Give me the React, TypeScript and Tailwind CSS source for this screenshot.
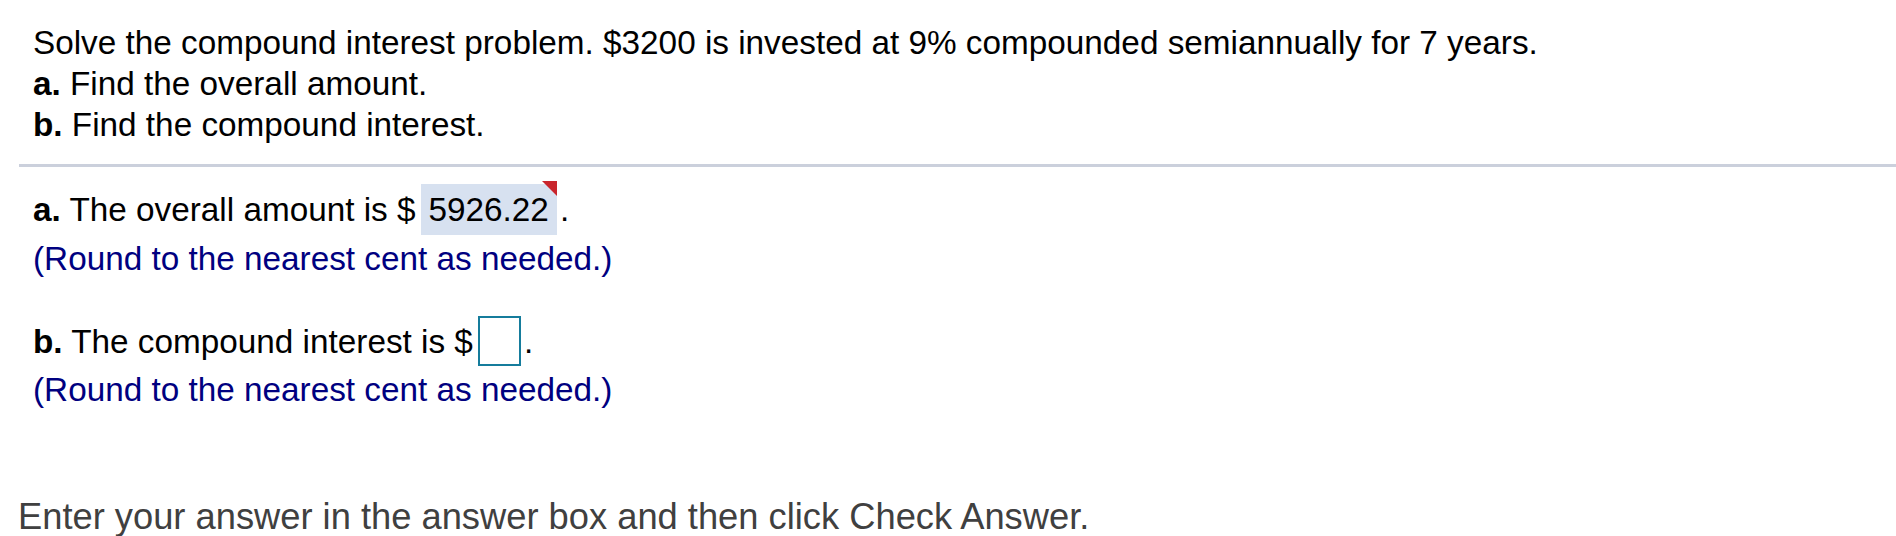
export default function App() {
  return (
    <div className="w-[1896px] h-[536px] overflow-hidden bg-white text-black font-['Liberation_Sans',Arial,sans-serif] pl-[18px] pt-[22px]">
      <div className="pl-[15px] text-[33.3px] leading-[41px]">
        <div>Solve the compound interest problem. $3200 is invested at 9% compounded semiannually for 7 years.</div>
        <div>
          <b>a.</b> Find the overall amount.
        </div>
        <div>
          <b>b.</b> Find the compound interest.
        </div>
      </div>

      <div className="mt-[19px] h-[3px] bg-[#cbd0dc] ml-px" />

      <div className="pl-[15px] text-[33.3px] mt-[17px]">
        <div className="leading-[41px]">
          <b>a.</b> The overall amount is $
          <span className="relative inline-block ml-[5px] bg-[#d7e1f0] px-[8px] py-[5px] leading-[41px]">
            5926.22
            <span className="absolute right-0 top-[-3px] w-0 h-0 border-t-[15px] border-l-[15px] border-t-[#c9252c] border-l-transparent" />
          </span>
          <span className="ml-[3px]">.</span>
        </div>
        <div className="leading-[47px] text-[#000080]">(Round to the nearest cent as needed.)</div>

        <div className="mt-[34px] leading-[41px]">
          <b>b.</b> The compound interest is $
          <span className="inline-block align-[-13px] w-[43px] h-[50px] border-2 border-[#157c9c] ml-[5px]" />
          <span className="ml-[3px]">.</span>
        </div>
        <div className="leading-[47px] text-[#000080]">(Round to the nearest cent as needed.)</div>
      </div>

      <div className="mt-[84px] text-[36.3px] leading-[40px] text-[#404040]">
        Enter your answer in the answer box and then click Check Answer.
      </div>
    </div>
  );
}
